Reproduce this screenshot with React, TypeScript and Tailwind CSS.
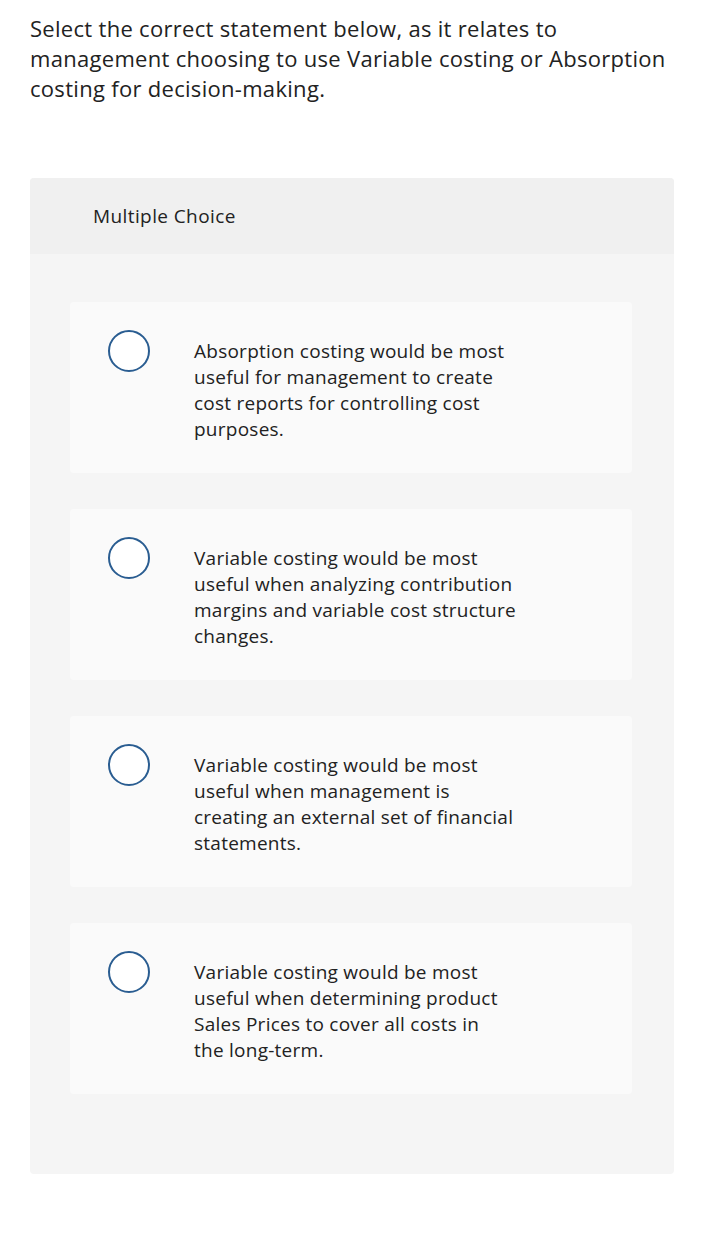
const options = [
  ["Absorption costing would be most", "useful for management to create", "cost reports for controlling cost", "purposes."],
  ["Variable costing would be most", "useful when analyzing contribution", "margins and variable cost structure", "changes."],
  ["Variable costing would be most", "useful when management is", "creating an external set of financial", "statements."],
  ["Variable costing would be most", "useful when determining product", "Sales Prices to cover all costs in", "the long-term."],
];

export default function App() {
  return (
    <main className="min-h-[1254px] w-[708px] bg-white font-['Open_Sans',sans-serif] text-[#222]">
      <p className="px-[30px] pt-[13px] text-[22px] leading-[30px] tracking-[0.3px]">
        Select the correct statement below, as it relates to
        <br />
        management choosing to use Variable costing or Absorption
        <br />
        costing for decision-making.
      </p>

      <section className="mx-[30px] mt-[75px] w-[644px] overflow-hidden rounded bg-[#f5f5f5]">
        <div className="flex h-[76px] items-center bg-[#f0f0f0] pl-[63px] text-[19px] tracking-[0.4px]">
          Multiple Choice
        </div>
        <div className="flex flex-col gap-[36px] pl-[40px] pr-[42px] pt-[48px] pb-[80px]">
          {options.map((lines) => (
            <label
              key={lines[0] + lines[1]}
              className="flex h-[171px] rounded bg-[#fafafa] pt-[36px] pl-[38px]"
            >
              <span className="mt-[-8px] h-[42px] w-[42px] shrink-0 rounded-full border-2 border-[#2a5d91] bg-white" />
              <span className="ml-[44px] text-[19px] leading-[26px] tracking-[0.25px]">
                {lines.map((l, i) => (
                  <span key={i} className="block whitespace-nowrap">
                    {l}
                  </span>
                ))}
              </span>
            </label>
          ))}
        </div>
      </section>
    </main>
  );
}
